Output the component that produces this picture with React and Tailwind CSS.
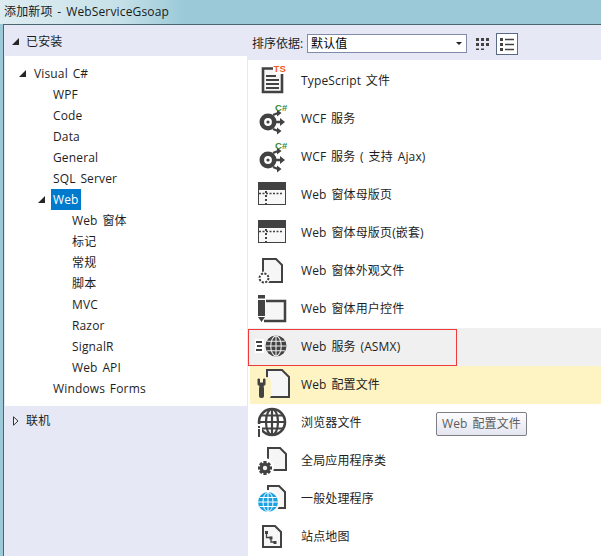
const D = "#424242";

function Doc({ x, y, w, h, fold = 6, fill = "#f6f6f6" }) {
  return (
    <path
      d={`M${x} ${y}H${x + w - fold}L${x + w} ${y + fold}V${y + h}H${x}Z`}
      fill={fill}
      stroke={D}
      strokeWidth="2"
    />
  );
}

function Globe({ cx, cy, r, color = D, line = "#f0f0f0", sw = 1.1 }) {
  return (
    <g>
      <circle cx={cx} cy={cy} r={r} fill={color} />
      <g fill="none" stroke={line} strokeWidth={sw}>
        <ellipse cx={cx} cy={cy} rx={r * 0.5} ry={r - 0.5} />
        <path d={`M${cx} ${cy - r}V${cy + r}M${cx - r} ${cy}H${cx + r}M${cx - r * 0.85} ${cy - r * 0.45}H${cx + r * 0.85}M${cx - r * 0.85} ${cy + r * 0.45}H${cx + r * 0.85}`} />
      </g>
    </g>
  );
}

function Gear({ cx, cy }) {
  const teeth = [0, 45, 90, 135];
  return (
    <g>
      {teeth.map((a) => (
        <rect key={a} x={cx - 1.6} y={cy - 7} width="3.2" height="14" fill={D} transform={`rotate(${a} ${cx} ${cy})`} />
      ))}
      <circle cx={cx} cy={cy} r="5.2" fill={D} />
      <circle cx={cx} cy={cy} r="2.2" fill="#f0f0f0" />
    </g>
  );
}

function Wcf() {
  return (
    <g>
      <circle cx="16" cy="22" r="6.2" fill="none" stroke={D} strokeWidth="4.6" />
      <circle cx="16" cy="22" r="1.6" fill={D} />
      <path d="M21 15L26 13M22 22H29M21 29L26 31" stroke={D} strokeWidth="2.4" fill="none" />
      <path d="M25 9.500L29.500 13L25 16.500ZM28 18L33 22L28 26ZM25 27.500L29.500 31L25 34.500Z" fill={D} />
      <text x="23" y="11" fontFamily="'Liberation Sans',sans-serif" fontWeight="700" fontSize="9.500" fill="#388a34">C#</text>
    </g>
  );
}

function Win() {
  return (
    <g>
      <rect x="6.500" y="6.500" width="27" height="22" fill="#f8f8f8" stroke={D} />
      <rect x="6" y="6" width="28" height="8" fill={D} />
      <path d="M7 17.500H31" stroke={D} strokeWidth="1.500" strokeDasharray="2 1.500" fill="none" />
      <path d="M14 15V29" stroke={D} strokeWidth="2" strokeDasharray="2 2" fill="none" />
    </g>
  );
}

const icons = [
  <g key="0">
    <path d="M11 6.500H30V30H11Z" fill="#f6f6f6" stroke={D} strokeWidth="2.600" />
    <path d="M14 14H24M14 18H27M14 22H27M14 26H27" stroke={D} strokeWidth="2" />
    <rect x="21" y="2" width="14" height="10" fill="#fff" />
    <text x="21.500" y="10" fontFamily="'Liberation Sans',sans-serif" fontWeight="700" fontSize="9.500" fill="#f05a1a">TS</text>
  </g>,
  <Wcf key="1" />,
  <Wcf key="2" />,
  <Win key="3" />,
  <Win key="4" />,
  <g key="5">
    <Doc x={11} y={7} w={19} h={23} />
    <circle cx="12" cy="26" r="6.500" fill="#fff" />
    <circle cx="12" cy="26" r="4.500" fill="#fff" stroke={D} strokeWidth="2" strokeDasharray="2.200 1.300" />
  </g>,
  <g key="6">
    <path d="M14 11H33V31H12" fill="#f6f6f6" stroke={D} strokeWidth="2.500" />
    <rect x="6" y="5" width="7" height="3.500" fill={D} />
    <rect x="6" y="10" width="7" height="16" fill={D} />
    <path d="M6 27H13L9.500 32Z" fill={D} />
  </g>,
  <g key="7">
    <rect x="3" y="11" width="9" height="14" fill="#fff" />
    <path d="M4 14H10M5 18H10M4 22H10" stroke={D} strokeWidth="1.800" />
    <Globe cx={24} cy={18} r={10.500} line="#efefef" />
  </g>,
  <g key="8">
    <Doc x={15} y={4} w={22} h={27} fold={7} />
    <rect x="5" y="11" width="14" height="23" rx="5" fill="#fef3c3" />
    <rect x="7" y="20" width="5" height="12" rx="2" fill={D} />
    <path d="M6 13V18.500L9.500 22L13 18.500V13L11.500 13V17H7.500V13Z" fill={D} stroke={D} />
  </g>,
  <g key="9">
    <circle cx="20" cy="18" r="13" fill="#fff" stroke={D} strokeWidth="2.600" />
    <g fill="none" stroke={D} strokeWidth="2.200">
      <ellipse cx="20" cy="18" rx="6" ry="13" />
      <path d="M20 5V31M7 18H33M9 11.500H31M9 24.500H31" />
    </g>
    <rect x="4" y="20" width="6" height="14" fill="#fff" />
    <rect x="6" y="22" width="2" height="2" fill={D} />
    <rect x="6" y="25" width="2" height="8" fill={D} />
  </g>,
  <g key="10">
    <Doc x={16} y={6} w={18} h={22} />
    <rect x="3" y="16" width="19" height="19" rx="9" fill="#fff" />
    <Gear cx={13} cy={26} />
  </g>,
  <g key="11">
    <Doc x={16} y={6} w={17} h={22} />
    <rect x="4" y="10" width="24" height="24" rx="12" fill="#fff" />
    <Globe cx={16} cy={22} r={10} color="#1ba1e2" line="#fff" sw={1} />
  </g>,
  <g key="12">
    <Doc x={11} y={8} w={18} h={21} />
    <path d="M14.500 14V19.500H19V24H23" fill="none" stroke={D} strokeWidth="1.300" />
    <rect x="13" y="13" width="3" height="3" fill={D} />
    <rect x="17.500" y="18.500" width="3" height="3" fill={D} />
    <rect x="21.500" y="23" width="3" height="3" fill={D} />
  </g>,
];

const rows = [
  "TypeScript 文件",
  "WCF 服务",
  "WCF 服务 ( 支持 Ajax)",
  "Web 窗体母版页",
  "Web 窗体母版页(嵌套)",
  "Web 窗体外观文件",
  "Web 窗体用户控件",
  "Web 服务 (ASMX)",
  "Web 配置文件",
  "浏览器文件",
  "全局应用程序类",
  "一般处理程序",
  "站点地图",
];

const tree = [
  ["Visual C#", 0, true],
  ["WPF", 1],
  ["Code", 1],
  ["Data", 1],
  ["General", 1],
  ["SQL Server", 1],
  ["Web", 1, true, true],
  ["Web 窗体", 2],
  ["标记", 2],
  ["常规", 2],
  ["脚本", 2],
  ["MVC", 2],
  ["Razor", 2],
  ["SignalR", 2],
  ["Web API", 2],
  ["Windows Forms", 1],
];

const indent = ["pl-[29px]", "pl-[48px]", "pl-[67px]"];
const arrowIndent = ["pl-[14px]", "pl-[33px]", "pl-[52px]"];

function Solid() {
  return <span className="w-0 h-0 border-l-[7px] border-l-transparent border-b-[7px] border-b-[#262626] block" />;
}

function TreeRow({ label, depth, arrow, selected }) {
  return (
    <div className={`h-[21px] flex items-center ${arrow ? arrowIndent[depth] : indent[depth]}`}>
      {arrow && (
        <span className="w-[15px] shrink-0 flex">
          <Solid />
        </span>
      )}
      <span className={`h-[21px] flex items-center px-[2px] -ml-[2px] ${selected ? "bg-[#007acc] text-white" : "text-[#1e1e1e]"}`}>
        {label}
      </span>
    </div>
  );
}

function Row({ icon, label, idx }) {
  const hover = idx === 7;
  const active = idx === 8;
  return (
    <div className={`relative h-[38px] flex items-center shrink-0 ${hover ? "bg-[#f0f0f0]" : ""} ${active ? "bg-[#fef3c3] ml-[2px]" : ""}`}>
      {hover && <span className="absolute left-0 top-[1px] w-[209px] h-[37px] border border-[#f03a3a]" />}
      <svg width="40" height="38" viewBox="0 0 40 38" className={`shrink-0 ${active ? "ml-[2px]" : "ml-[4px]"}`}>
        {icon}
      </svg>
      <span className="ml-[9px] text-[#1e1e1e] whitespace-pre">{label}</span>
    </div>
  );
}

export default function App() {
  return (
    <div
      className="w-[601px] h-[556px] overflow-hidden flex flex-col bg-[#9bc9d8] text-[12px] tracking-[0.15px] [word-spacing:1.5px]"
      style={{ fontFamily: "'Open Sans','Noto Sans CJK SC',sans-serif" }}
    >
      <div className="h-[24px] shrink-0 flex items-center pl-[4px] text-[#1a1a1a] bg-[linear-gradient(90deg,#dcecf1_0%,#d3e7ed_60px,#c5e0e8_120px,#9bc9d8_185px)]">
        添加新项 - WebServiceGsoap
      </div>
      <div className="flex-1 min-h-0 flex pl-[3px]">
        <div className="flex-1 min-w-0 border-l border-t border-[#4d6570] bg-[#e6e9f5] flex">
          <div className="w-[244px] shrink-0 flex flex-col">
            <div className="h-[31px] shrink-0 flex items-center pl-[8px] pt-[2px] text-[#1e1e1e]">
              <span className="w-[14px] shrink-0 flex"><Solid /></span>
              已安装
            </div>
            <div className="ml-[1px] mr-[1px] h-[350px] shrink-0 bg-white pt-[7px]">
              {tree.map(([label, depth, arrow, selected]) => (
                <TreeRow key={label} label={label} depth={depth} arrow={arrow} selected={selected} />
              ))}
            </div>
            <div className="h-[29px] flex items-center pl-[9px] text-[#1e1e1e]">
              <span className="w-[13px] shrink-0 flex">
                <svg width="6" height="10" viewBox="0 0 6 10">
                  <path d="M0.500 0.800L5 5L0.500 9.200Z" fill="#f4f5fa" stroke="#333" />
                </svg>
              </span>
              联机
            </div>
          </div>
          <div className="flex-1 min-w-0 flex flex-col">
            <div className="h-[35px] shrink-0 flex items-center pl-[4px] pt-[2px] text-[#1e1e1e]">
              <span className="w-[55px] shrink-0 tracking-normal whitespace-nowrap">排序依据:</span>
              <div className="w-[160px] h-[19px] border border-[#7f8ba8] bg-white flex items-center justify-between pl-[3px] pr-[4px] text-black">
                默认值
                <span className="w-0 h-0 border-x-[3.5px] border-x-transparent border-t-[3.500px] border-t-[#222]" />
              </div>
              <svg width="16" height="16" viewBox="0 0 16 16" className="ml-[8px] shrink-0">
                <path d="M1 2h3v3H1zM6 2h3v3H6zM11 2h3v3h-3zM1 7h3v3H1zM6 7h3v3H6zM11 7h3v3h-3zM1 12.500h3v1.500H1zM6 12.500h3v1.500H6z" fill={D} />
              </svg>
              <div className="w-[22px] h-[22px] ml-[5px] border border-[#5a6a85] bg-white flex items-center justify-center shrink-0">
                <svg width="16" height="16" viewBox="0 0 16 16">
                  <path d="M1 2h3v3H1zM1 7h3v3H1zM1 12h3v3H1z" fill={D} />
                  <path d="M6 3.500h9M6 8.500h9M6 13.500h9" stroke={D} strokeWidth="1.300" />
                </svg>
              </div>
            </div>
            <div className="flex-1 min-h-0 bg-white pt-[2px] flex flex-col relative">
              {rows.map((label, i) => (
                <Row key={label} icon={icons[i]} label={label} idx={i} />
              ))}
              <div className="absolute left-[188px] top-[352px] w-[91px] h-[24px] rounded-[2px] border border-[#7d7d85] bg-[linear-gradient(180deg,#fdfdfe,#e4e5f0)] flex items-center justify-center text-[#5c5c5c] whitespace-nowrap">
                Web 配置文件
              </div>
            </div>
          </div>
        </div>
      </div>
    </div>
  );
}
